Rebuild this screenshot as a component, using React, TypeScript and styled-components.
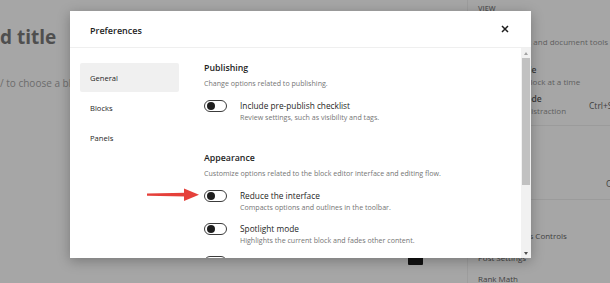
import React from "react";
import styled, { createGlobalStyle } from "styled-components";

const GlobalStyle = createGlobalStyle`
  html, body {
    margin: 0;
    padding: 0;
  }
  body {
    font-family: "Open Sans", "Noto Sans", sans-serif;
    overflow: hidden;
  }
`;

const Page = styled.div`
  position: relative;
  display: flex;
  width: 610px;
  height: 283px;
  overflow: hidden;
  background: #a6a6a6;
`;

/* ---------- editor behind the overlay ---------- */

const EditorMain = styled.main`
  display: flex;
  flex-direction: column;
  width: 467px;
  padding-top: 24px;
  box-sizing: border-box;
`;

const PostTitle = styled.h1`
  margin: 0;
  font-size: 19px;
  font-weight: 700;
  line-height: 26px;
  color: #4f4f4f;
`;

const Hint = styled.p`
  margin: 26px 0 0;
  font-size: 10px;
  line-height: 14px;
  color: #6c6c6c;
  white-space: nowrap;
`;

const BlockButton = styled.div`
  align-self: flex-end;
  margin: auto 44px 18px 0;
  width: 15px;
  height: 25px;
  background: #111;
  border-radius: 1px;
`;

const Sidebar = styled.aside`
  flex: 1;
  border-left: 1px solid #9d9d9d;
  overflow: hidden;
`;

const MenuGroup = styled.div<{ $top: number; $bottom: number }>`
  padding: ${(p) => `${p.$top}px 0 ${p.$bottom}px`};
  border-bottom: 1px solid #9b9b9b;
`;

const GroupLabel = styled.div`
  padding-left: 10px;
  font-size: 7.2px;
  line-height: 12px;
  font-weight: 600;
  text-transform: uppercase;
  color: #555;
`;

const MenuRow = styled.div<{ $top?: number; $h?: number }>`
  display: flex;
  align-items: center;
  padding: ${(p) => p.$top ?? 0}px 0 0 6px;
  ${(p) => (p.$h ? `height: ${p.$h}px;` : "")}
  white-space: nowrap;
`;

const MenuText = styled.div<{ $w: number }>`
  width: ${(p) => p.$w}px;
  flex-shrink: 0;
`;

const MenuTitle = styled.div`
  font-size: 8.5px;
  line-height: 12px;
  font-weight: 600;
  color: #3a3a3a;
`;

const MenuDesc = styled.div`
  font-size: 8px;
  line-height: 12px;
  color: #5e5e5e;
`;

const Keys = styled.div`
  font-size: 8.5px;
  color: #3f3f3f;
`;

const PluginList = styled.div`
  padding-top: 13px;
`;

const PluginItem = styled.div`
  padding-left: 10px;
  font-size: 8px;
  line-height: 21.5px;
  color: #3f3f3f;
  white-space: nowrap;
`;

/* ---------- preferences modal ---------- */

const Modal = styled.div`
  position: absolute;
  left: 70px;
  top: 11px;
  width: 461px;
  height: 247px;
  background: #fff;
  box-shadow: 0 3px 12px rgba(0, 0, 0, 0.28);
  display: flex;
  flex-direction: column;
  overflow: hidden;
`;

const ModalHeader = styled.header`
  display: flex;
  align-items: center;
  justify-content: space-between;
  height: 37px;
  flex-shrink: 0;
  padding: 0 22px 0 20px;
  border-bottom: 1px solid #efefef;
  box-sizing: border-box;
`;

const ModalTitle = styled.h2`
  margin: 0;
  padding-top: 2px;
  font-size: 9px;
  font-weight: 600;
  color: #1e1e1e;
`;

const CloseButton = styled.button`
  display: flex;
  padding: 0;
  border: 0;
  background: none;
`;

const ModalBody = styled.div`
  display: flex;
  flex: 1;
  min-height: 0;
`;

const Nav = styled.nav`
  display: flex;
  flex-direction: column;
  gap: 1px;
  width: 120px;
  flex-shrink: 0;
  padding: 15px 0 0 10px;
  box-sizing: border-box;
`;

const Tab = styled.div<{ $active?: boolean }>`
  display: flex;
  align-items: center;
  width: 99px;
  height: 29px;
  padding-left: 10px;
  box-sizing: border-box;
  border-radius: 2px;
  font-size: 7.6px;
  color: #1e1e1e;
  background: ${(p) => (p.$active ? "#f0f0f0" : "transparent")};
`;

const Content = styled.div`
  flex: 1;
  padding: 12px 0 0 14px;
  overflow: hidden;
`;

const Section = styled.section<{ $gap: number }>`
  margin-bottom: ${(p) => p.$gap}px;
`;

const SectionTitle = styled.h3`
  margin: 0;
  font-size: 8.8px;
  line-height: 16px;
  font-weight: 600;
  color: #1e1e1e;
`;

const SectionDesc = styled.p`
  margin: 0 0 9px;
  font-size: 7.1px;
  line-height: 14px;
  color: #757575;
`;

const Option = styled.div`
  display: flex;
  align-items: flex-start;
  gap: 13px;
  height: 33px;
`;

const Toggle = styled.span`
  position: relative;
  display: block;
  width: 21px;
  height: 10px;
  margin-top: 0.5px;
  border: 1px solid #3c3c3c;
  border-radius: 6px;
  flex-shrink: 0;
  &::after {
    content: "";
    position: absolute;
    left: 2px;
    top: 1px;
    width: 8px;
    height: 8px;
    border-radius: 50%;
    background: #1e1e1e;
  }
`;

const OptionText = styled.div`
  display: flex;
  flex-direction: column;
`;

const OptionLabel = styled.span`
  font-size: 8.3px;
  line-height: 13px;
  color: #1e1e1e;
`;

const OptionHelp = styled.span`
  font-size: 7.1px;
  line-height: 11px;
  color: #757575;
`;

const Scrollbar = styled.div`
  display: flex;
  flex-direction: column;
  width: 10px;
  flex-shrink: 0;
  background: #f1f1f1;
`;

const Arrow = styled.div<{ $down?: boolean }>`
  height: 10px;
  display: flex;
  align-items: center;
  justify-content: center;
  &::before {
    content: "";
    border-left: 2.5px solid transparent;
    border-right: 2.5px solid transparent;
    ${(p) =>
      p.$down
        ? "border-top: 3px solid #505050;"
        : "border-bottom: 3px solid #a3a3a3;"}
  }
`;

const Thumb = styled.div`
  height: 127px;
  margin: 0 1px;
  background: #c1c1c1;
`;

const Spacer = styled.div`
  flex: 1;
`;

const Pointer = styled.svg`
  position: absolute;
  left: 146px;
  top: 188px;
`;

const options = {
  publishing: [
    {
      label: "Include pre-publish checklist",
      help: "Review settings, such as visibility and tags.",
    },
  ],
  appearance: [
    {
      label: "Reduce the interface",
      help: "Compacts options and outlines in the toolbar.",
    },
    {
      label: "Spotlight mode",
      help: "Highlights the current block and fades other content.",
    },
    {
      label: "Display button labels",
      help: "Shows text instead of icons in toolbar.",
    },
  ],
};

type Opt = { label: string; help: string };

const OptionList = ({ items }: { items: Opt[] }) => (
  <>
    {items.map((o) => (
      <Option key={o.label}>
        <Toggle />
        <OptionText>
          <OptionLabel>{o.label}</OptionLabel>
          <OptionHelp>{o.help}</OptionHelp>
        </OptionText>
      </Option>
    ))}
  </>
);

export default function App() {
  return (
    <>
      <GlobalStyle />
      <Page>
        <EditorMain>
          <PostTitle>d title</PostTitle>
          <Hint>/ to choose a block</Hint>
          <BlockButton />
        </EditorMain>

        <Sidebar>
          <MenuGroup $top={2} $bottom={8}>
            <GroupLabel>View</GroupLabel>
            <MenuRow $top={10}>
              <MenuText $w={200}>
                <MenuTitle>Top toolbar</MenuTitle>
                <MenuDesc>Access all block and document tools in a</MenuDesc>
                <MenuDesc>single place</MenuDesc>
              </MenuText>
            </MenuRow>
            <MenuRow $top={4}>
              <MenuText $w={200}>
                <MenuTitle>Spotlight mode</MenuTitle>
                <MenuDesc>Focus on one block at a time</MenuDesc>
              </MenuText>
            </MenuRow>
            <MenuRow $top={5}>
              <MenuText $w={115}>
                <MenuTitle>Fullscreen mode</MenuTitle>
                <MenuDesc>Work without distraction</MenuDesc>
              </MenuText>
              <Keys>Ctrl+Shift+Alt+F</Keys>
            </MenuRow>
          </MenuGroup>

          <MenuGroup $top={12} $bottom={5}>
            <GroupLabel>Editor</GroupLabel>
            <MenuRow $h={22}>
              <MenuText $w={132}>
                <MenuTitle>Visual editor</MenuTitle>
              </MenuText>
            </MenuRow>
            <MenuRow $h={22}>
              <MenuText $w={132}>
                <MenuTitle>Code editor</MenuTitle>
              </MenuText>
              <Keys>Ctrl+Shift+Alt+M</Keys>
            </MenuRow>
          </MenuGroup>

          <PluginList>
            <GroupLabel>Plugins</GroupLabel>
            <PluginItem>Genesis Blocks Controls</PluginItem>
            <PluginItem>Post Settings</PluginItem>
            <PluginItem>Rank Math</PluginItem>
          </PluginList>
        </Sidebar>

        <Modal>
          <ModalHeader>
            <ModalTitle>Preferences</ModalTitle>
            <CloseButton aria-label="Close">
              <svg width="8" height="8" viewBox="0 0 8 8">
                <path
                  d="M1 1 L7 7 M7 1 L1 7"
                  stroke="#1e1e1e"
                  strokeWidth="1.5"
                  fill="none"
                />
              </svg>
            </CloseButton>
          </ModalHeader>
          <ModalBody>
            <Nav>
              <Tab $active>General</Tab>
              <Tab>Blocks</Tab>
              <Tab>Panels</Tab>
            </Nav>
            <Content>
              <Section $gap={18}>
                <SectionTitle>Publishing</SectionTitle>
                <SectionDesc>Change options related to publishing.</SectionDesc>
                <OptionList items={options.publishing} />
              </Section>
              <Section $gap={0}>
                <SectionTitle>Appearance</SectionTitle>
                <SectionDesc>
                  Customize options related to the block editor interface and
                  editing flow.
                </SectionDesc>
                <OptionList items={options.appearance} />
              </Section>
            </Content>
            <Scrollbar>
              <Arrow />
              <Thumb />
              <Spacer />
              <Arrow $down />
            </Scrollbar>
          </ModalBody>
        </Modal>

        <Pointer width="54" height="14" viewBox="0 0 54 14">
          <path d="M1 5.4 L40 4.8 L40 8.6 L1 7.8 Z" fill="#e5403a" />
          <path d="M38 0.5 L53 6.7 L38 13 Z" fill="#e5403a" />
        </Pointer>
      </Page>
    </>
  );
}
